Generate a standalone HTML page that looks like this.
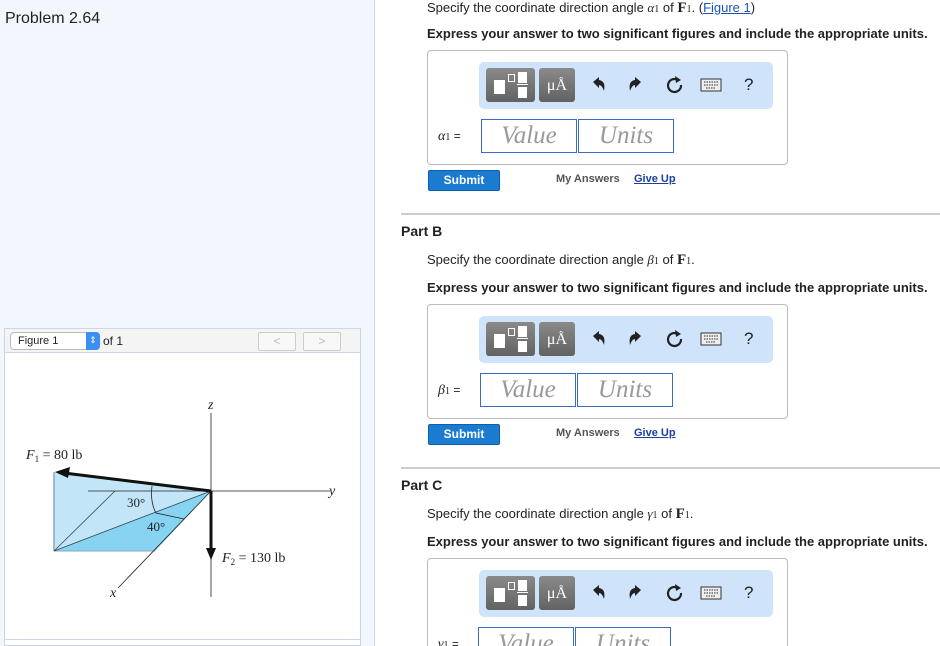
<!DOCTYPE html>
<html><head><meta charset="utf-8"><style>
*{margin:0;padding:0;box-sizing:border-box}
html,body{width:940px;height:646px;overflow:hidden}
body{background:#fff;font-family:"Liberation Sans",Arial,sans-serif;color:#222;position:relative}
.a{position:absolute}
.left{left:0;top:0;width:375px;height:646px;background:#f2f7fd;border-right:1px solid #c8d8ea}
.t{font-size:13px;white-space:nowrap}
.b{font-weight:bold}
.m{font-family:"Liberation Serif",serif}
.blk{position:absolute;left:427px;width:362px;height:145px;overflow:hidden}
.box{position:absolute;left:0;top:0;border:1px solid #bbb;border-radius:4px;width:361px;height:115px;background:#fff}
.tb{position:absolute;left:52px;top:12px;background:#cfe4fb;border-radius:5px;width:294px;height:47px}
.btn{position:absolute;background:linear-gradient(#8a8a8a,#626262);border-radius:3px;height:34px;top:6px}
.inp{position:absolute;top:69px;width:96px;border:1px solid #3a6bc6;height:34px;font-family:"Liberation Serif",serif;font-style:italic;font-size:25px;color:#999;text-align:center;line-height:32px;background:#fff}
.sub{position:absolute;left:1px;top:120px;background:#1a7bd0;border:1px solid #0e5ea8;color:#fff;font-weight:bold;font-size:12px;width:72px;height:21px;border-radius:2px;text-align:center;line-height:19px}
.hr{left:401px;width:539px;height:2px;background:#ccc}
.ic{position:absolute;top:12px}
</style></head><body>
<div class="a left"></div>
<div class="a t" style="left:5px;top:10px;font-size:16px">Problem 2.64</div>

<div class="a" style="left:4px;top:328px;width:357px;height:318px;background:#fff;border:1px solid #c8d8ea"></div>
<div class="a" style="left:4px;top:328px;width:357px;height:25px;background:#f4f4f4;border:1px solid #c8d8ea"></div>
<div class="a" style="left:10px;top:332px;width:90px;height:18px;background:#fff;border:1px solid #bbb;border-radius:4px;font-size:11px;line-height:16px;padding-left:7px">Figure 1</div>
<div class="a" style="left:86px;top:332px;width:14px;height:18px;background:#3b8ff0;border-radius:0 4px 4px 0;color:#fff;font-size:9px;text-align:center;line-height:17px">⇕</div>
<div class="a t" style="left:103px;top:334px;font-size:12px">of 1</div>
<div class="a" style="left:258px;top:332px;width:38px;height:19px;border:1px solid #ccc;border-radius:2px;background:#f8f8f8;color:#bbb;text-align:center;font-size:12px;line-height:17px">&lt;</div>
<div class="a" style="left:303px;top:332px;width:38px;height:19px;border:1px solid #ccc;border-radius:2px;background:#f8f8f8;color:#bbb;text-align:center;font-size:12px;line-height:17px">&gt;</div>
<div class="a" style="left:4px;top:639px;width:357px;height:1px;background:#c8d8ea"></div>
<svg class="a" style="left:0;top:320px" width="375" height="326">
<polygon points="54,152 211,171 155,231 54,231" fill="#c2e6f8"/>
<polygon points="54,231 211,171 155,231" fill="#86d4f2"/>
<line x1="54" y1="152" x2="54" y2="231" stroke="#8ab" stroke-width="1.5"/>
<line x1="54" y1="231" x2="155" y2="231" stroke="#8ab" stroke-width="1"/>
<line x1="54" y1="231" x2="211" y2="171" stroke="#345" stroke-width="0.8"/>
<line x1="54" y1="231" x2="115" y2="171" stroke="#345" stroke-width="0.8"/>
<line x1="88" y1="171" x2="330" y2="171" stroke="#222" stroke-width="0.8"/>
<line x1="211" y1="93" x2="211" y2="277" stroke="#222" stroke-width="0.8"/>
<line x1="211" y1="171" x2="118" y2="268" stroke="#222" stroke-width="0.8"/>
<line x1="211" y1="171" x2="64" y2="153" stroke="#111" stroke-width="3"/>
<polygon points="55,152 70,147 68,158" fill="#111"/>
<line x1="211" y1="171" x2="211" y2="228" stroke="#111" stroke-width="3"/>
<polygon points="206,228 216,228 211,240" fill="#111"/>
<path d="M152,166 Q150,182 156,193 Q170,196 184,199" fill="none" stroke="#222" stroke-width="0.8"/>
<g font-family="Liberation Serif,serif" font-size="14" fill="#222">
<text x="208" y="89" font-style="italic">z</text>
<text x="329" y="175" font-style="italic">y</text>
<text x="110" y="277" font-style="italic">x</text>
<text x="26" y="139"><tspan font-style="italic">F</tspan><tspan font-size="9" dy="3">1</tspan><tspan dy="-3"> = 80 lb</tspan></text>
<text x="222" y="242"><tspan font-style="italic">F</tspan><tspan font-size="9" dy="3">2</tspan><tspan dy="-3"> = 130 lb</tspan></text>
<text x="127" y="187" font-size="13">30°</text>
<text x="147" y="211" font-size="13">40°</text>
</g>
</svg>

<div class="a t" style="left:427px;top:0px">Specify the coordinate direction angle <span class="m" style="font-style:italic">α</span><span class="m" style="font-size:10px">1</span> of <span class="m b" style="font-size:15px">F</span><span class="m" style="font-size:10px">1</span>. (<span style="color:#1a55b0;text-decoration:underline">Figure 1</span>)</div>
<div class="a t b" style="left:427px;top:26px">Express your answer to two significant figures and include the appropriate units.</div>

<div class="a hr" style="top:213px"></div>
<div class="a t b" style="left:401px;top:223px;font-size:14px">Part B</div>
<div class="a t" style="left:427px;top:252px">Specify the coordinate direction angle <span class="m" style="font-style:italic">β</span><span class="m" style="font-size:10px">1</span> of <span class="m b" style="font-size:15px">F</span><span class="m" style="font-size:10px">1</span>.</div>
<div class="a t b" style="left:427px;top:280px">Express your answer to two significant figures and include the appropriate units.</div>

<div class="a hr" style="top:467px"></div>
<div class="a t b" style="left:401px;top:477px;font-size:14px">Part C</div>
<div class="a t" style="left:427px;top:506px">Specify the coordinate direction angle <span class="m" style="font-style:italic">γ</span><span class="m" style="font-size:10px">1</span> of <span class="m b" style="font-size:15px">F</span><span class="m" style="font-size:10px">1</span>.</div>
<div class="a t b" style="left:427px;top:534px">Express your answer to two significant figures and include the appropriate units.</div>

<div class="blk" style="top:50px">
 <div class="box"></div>
 <div class="tb">
  <div class="btn" style="left:7px;width:49px"><div class="a" style="left:8px;top:12px;width:11px;height:14px;background:#fff"></div><div class="a" style="left:22px;top:6px;width:7px;height:8px;border:1px solid #fff"></div><div class="a" style="left:32px;top:4px;width:9px;height:11px;background:#fff"></div><div class="a" style="left:31px;top:16px;width:11px;height:1px;background:#fff"></div><div class="a" style="left:32px;top:19px;width:9px;height:11px;background:#fff"></div></div>
  <div class="btn" style="left:60px;width:36px;color:#fff;font-family:'Liberation Serif',serif;font-size:16px;text-align:center;line-height:36px">μÅ</div>
  <svg class="ic" style="left:110px" width="20" height="22" viewBox="0 0 20 22"><path d="M4,8 L10,3 L10,6 Q17,7 15,17 Q13,11 10,11 L10,14 Z" fill="#222"/></svg>
  <svg class="ic" style="left:146px" width="20" height="22" viewBox="0 0 20 22"><path d="M16,8 L10,3 L10,6 Q3,7 5,17 Q7,11 10,11 L10,14 Z" fill="#222"/></svg>
  <svg class="ic" style="left:186px" width="20" height="22" viewBox="0 0 20 22"><path d="M13,6 A6.5,6.5 0 1 0 16,11" fill="none" stroke="#222" stroke-width="2.2"/><path d="M10,2 L16,6 L11,9 Z" fill="#222"/></svg>
  <svg class="ic" style="left:221px;top:16px" width="22" height="14" viewBox="0 0 22 14"><rect x="1" y="1" width="20" height="12" fill="#eee" stroke="#333"/><path d="M4,4h14M4,7h14M6,10h10" stroke="#555" stroke-width="1.2" stroke-dasharray="1.5 1"/></svg>
  <div class="a" style="left:265px;top:13px;font-size:17px;color:#222">?</div>
 </div>
 <div class="a t" style="left:11px;top:79px;font-size:12px"><span class="m" style="font-style:italic;font-size:14px">α</span><span class="m" style="font-size:10px">1</span> =</div>
 <div class="inp" style="left:54px">Value</div>
 <div class="inp" style="left:151px">Units</div>
 <div class="sub">Submit</div>
 <div class="a t b" style="left:129px;top:123px;font-size:11px;color:#555">My Answers</div>
 <div class="a t b" style="left:207px;top:123px;font-size:11px;color:#1a3fa0;text-decoration:underline">Give Up</div>
</div>

<div class="blk" style="top:304px">
 <div class="box"></div>
 <div class="tb">
  <div class="btn" style="left:7px;width:49px"><div class="a" style="left:8px;top:12px;width:11px;height:14px;background:#fff"></div><div class="a" style="left:22px;top:6px;width:7px;height:8px;border:1px solid #fff"></div><div class="a" style="left:32px;top:4px;width:9px;height:11px;background:#fff"></div><div class="a" style="left:31px;top:16px;width:11px;height:1px;background:#fff"></div><div class="a" style="left:32px;top:19px;width:9px;height:11px;background:#fff"></div></div>
  <div class="btn" style="left:60px;width:36px;color:#fff;font-family:'Liberation Serif',serif;font-size:16px;text-align:center;line-height:36px">μÅ</div>
  <svg class="ic" style="left:110px" width="20" height="22" viewBox="0 0 20 22"><path d="M4,8 L10,3 L10,6 Q17,7 15,17 Q13,11 10,11 L10,14 Z" fill="#222"/></svg>
  <svg class="ic" style="left:146px" width="20" height="22" viewBox="0 0 20 22"><path d="M16,8 L10,3 L10,6 Q3,7 5,17 Q7,11 10,11 L10,14 Z" fill="#222"/></svg>
  <svg class="ic" style="left:186px" width="20" height="22" viewBox="0 0 20 22"><path d="M13,6 A6.5,6.5 0 1 0 16,11" fill="none" stroke="#222" stroke-width="2.2"/><path d="M10,2 L16,6 L11,9 Z" fill="#222"/></svg>
  <svg class="ic" style="left:221px;top:16px" width="22" height="14" viewBox="0 0 22 14"><rect x="1" y="1" width="20" height="12" fill="#eee" stroke="#333"/><path d="M4,4h14M4,7h14M6,10h10" stroke="#555" stroke-width="1.2" stroke-dasharray="1.5 1"/></svg>
  <div class="a" style="left:265px;top:13px;font-size:17px;color:#222">?</div>
 </div>
 <div class="a t" style="left:11px;top:79px;font-size:12px"><span class="m" style="font-style:italic;font-size:14px">β</span><span class="m" style="font-size:10px">1</span> =</div>
 <div class="inp" style="left:53px">Value</div>
 <div class="inp" style="left:150px">Units</div>
 <div class="sub">Submit</div>
 <div class="a t b" style="left:129px;top:123px;font-size:11px;color:#555">My Answers</div>
 <div class="a t b" style="left:207px;top:123px;font-size:11px;color:#1a3fa0;text-decoration:underline">Give Up</div>
</div>

<div class="blk" style="top:558px;height:88px">
 <div class="box" style="height:120px"></div>
 <div class="tb">
  <div class="btn" style="left:7px;width:49px"><div class="a" style="left:8px;top:12px;width:11px;height:14px;background:#fff"></div><div class="a" style="left:22px;top:6px;width:7px;height:8px;border:1px solid #fff"></div><div class="a" style="left:32px;top:4px;width:9px;height:11px;background:#fff"></div><div class="a" style="left:31px;top:16px;width:11px;height:1px;background:#fff"></div><div class="a" style="left:32px;top:19px;width:9px;height:11px;background:#fff"></div></div>
  <div class="btn" style="left:60px;width:36px;color:#fff;font-family:'Liberation Serif',serif;font-size:16px;text-align:center;line-height:36px">μÅ</div>
  <svg class="ic" style="left:110px" width="20" height="22" viewBox="0 0 20 22"><path d="M4,8 L10,3 L10,6 Q17,7 15,17 Q13,11 10,11 L10,14 Z" fill="#222"/></svg>
  <svg class="ic" style="left:146px" width="20" height="22" viewBox="0 0 20 22"><path d="M16,8 L10,3 L10,6 Q3,7 5,17 Q7,11 10,11 L10,14 Z" fill="#222"/></svg>
  <svg class="ic" style="left:186px" width="20" height="22" viewBox="0 0 20 22"><path d="M13,6 A6.5,6.5 0 1 0 16,11" fill="none" stroke="#222" stroke-width="2.2"/><path d="M10,2 L16,6 L11,9 Z" fill="#222"/></svg>
  <svg class="ic" style="left:221px;top:16px" width="22" height="14" viewBox="0 0 22 14"><rect x="1" y="1" width="20" height="12" fill="#eee" stroke="#333"/><path d="M4,4h14M4,7h14M6,10h10" stroke="#555" stroke-width="1.2" stroke-dasharray="1.5 1"/></svg>
  <div class="a" style="left:265px;top:13px;font-size:17px;color:#222">?</div>
 </div>
 <div class="a t" style="left:11px;top:79px;font-size:12px"><span class="m" style="font-style:italic;font-size:14px">γ</span><span class="m" style="font-size:10px">1</span> =</div>
 <div class="inp" style="left:51px">Value</div>
 <div class="inp" style="left:148px">Units</div>
</div>
</body></html>
